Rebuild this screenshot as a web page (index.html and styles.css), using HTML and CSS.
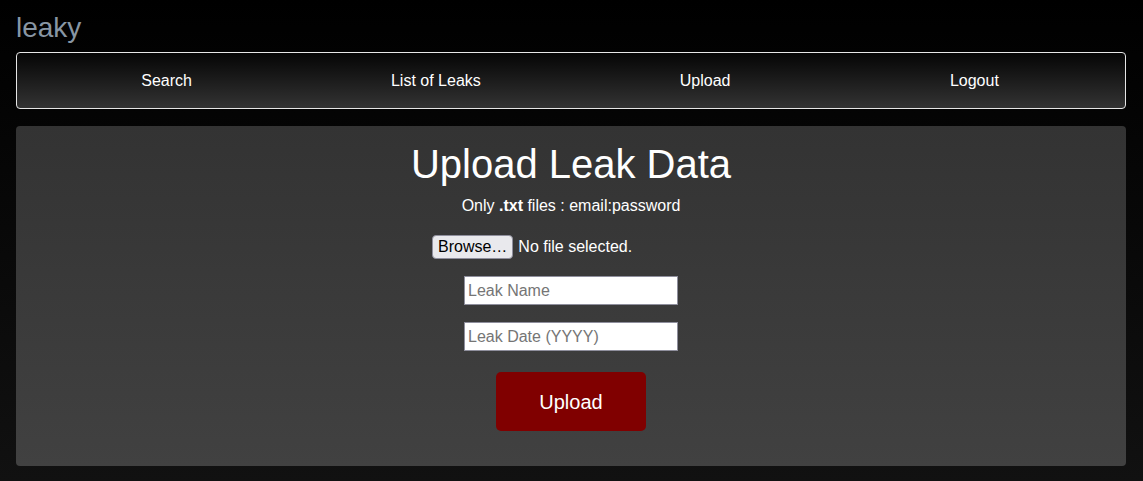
FILE: index.html
```html
<!DOCTYPE html>
<html>
<head>
<meta charset="utf-8">
<title>leaky - Upload</title>
<link rel="stylesheet" href="styles.css">
</head>
<body>
<div class="brand">leaky</div>
<nav class="nav">
  <a class="nav-item" href="#">Search</a>
  <a class="nav-item" href="#">List of Leaks</a>
  <a class="nav-item" href="#">Upload</a>
  <a class="nav-item" href="#">Logout</a>
</nav>
<main class="panel">
  <h1 class="title">Upload Leak Data</h1>
  <p class="hint">Only <b>.txt</b> files : email:password</p>
  <div class="file-row">
    <span class="browse">Browse…</span>
    <span class="file-label">No file selected.</span>
  </div>
  <input class="field field-first" type="text" placeholder="Leak Name">
  <input class="field" type="text" placeholder="Leak Date (YYYY)">
  <button class="upload" type="button">Upload</button>
</main>
</body>
</html>
```
FILE: styles.css
```css
html, body {
  margin: 0;
  padding: 0;
}
body {
  min-height: 481px;
  padding: 0 17px 14px 16px;
  background: linear-gradient(#000000, #111111);
  font-family: "Liberation Sans", Arial, sans-serif;
  color: #ffffff;
  box-sizing: border-box;
}
.brand {
  padding-top: 12px;
  font-size: 28px;
  line-height: 32px;
  color: #8896a4;
}
.nav {
  margin-top: 8px;
  height: 57px;
  box-sizing: border-box;
  border: 1px solid #e6e6e6;
  border-radius: 4px;
  background: linear-gradient(#050505, #333333);
  display: flex;
  padding: 0 16px 0 15px;
}
.nav-item {
  flex: 1;
  text-align: center;
  line-height: 55px;
  font-size: 16px;
  color: #ffffff;
  text-decoration: none;
}
.panel {
  margin-top: 17px;
  height: 340px;
  box-sizing: border-box;
  padding-top: 15px;
  border-radius: 4px;
  background: linear-gradient(#333333, #414141);
  display: flex;
  flex-direction: column;
  align-items: center;
}
.title {
  margin: 0;
  font-size: 40px;
  line-height: 46px;
  font-weight: normal;
}
.hint {
  margin: 9px 0 0;
  font-size: 16px;
  line-height: 19px;
}
.file-row {
  margin-top: 20px;
  width: 278px;
  display: flex;
  align-items: center;
  gap: 5px;
  height: 24px;
  font-size: 16px;
}
.browse {
  box-sizing: border-box;
  height: 24px;
  padding: 0 5px;
  line-height: 22px;
  border: 1px solid #8f8f9d;
  border-radius: 4px;
  background: #e9e9ed;
  color: #000000;
}
.file-label {
  color: #ffffff;
}
.field {
  margin: 17px 0 0;
  width: 214px;
  height: 29px;
  box-sizing: border-box;
  border: 1px solid #8f8f9d;
  padding: 0 3px;
  font-family: "Liberation Sans", Arial, sans-serif;
  font-size: 16px;
  background: #ffffff;
  color: #000000;
}
.field::placeholder {
  color: #757575;
}
.upload {
  margin-top: 21px;
  width: 150px;
  height: 59px;
  padding-top: 2px;
  border: none;
  border-radius: 5px;
  background: #800000;
  color: #ffffff;
  font-family: "Liberation Sans", Arial, sans-serif;
  font-size: 20px;
}
```
